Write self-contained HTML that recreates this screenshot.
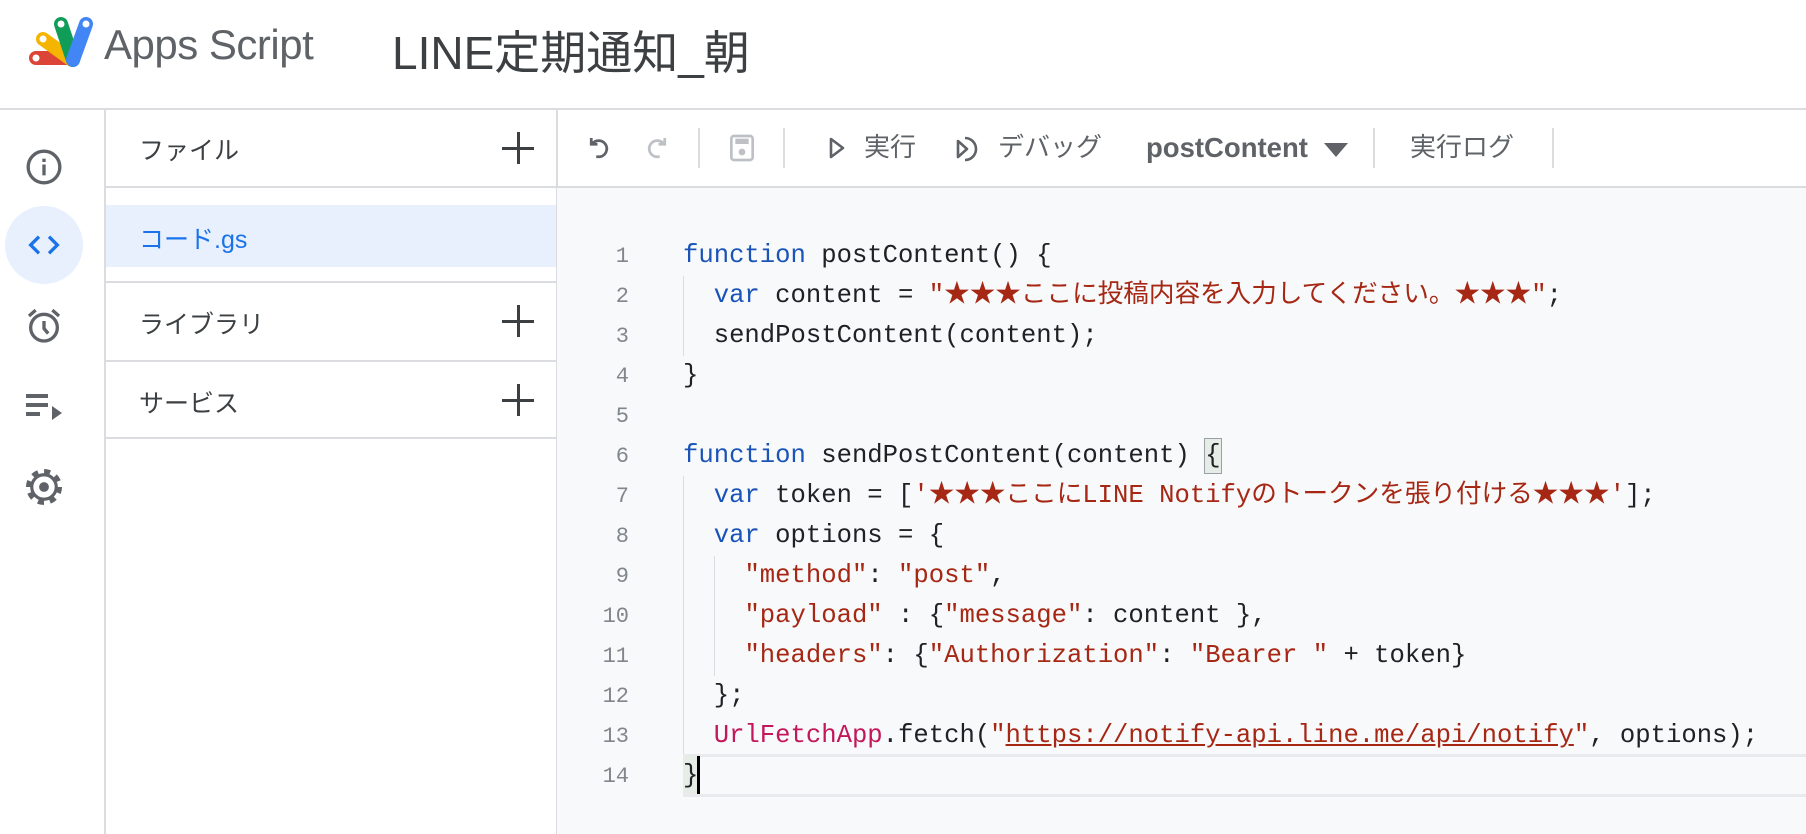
<!DOCTYPE html>
<html><head><meta charset="utf-8"><style>
*{margin:0;padding:0;box-sizing:border-box}
body{width:1806px;height:834px;background:#fff;position:relative;overflow:hidden;font-family:"Liberation Sans","Noto Sans CJK JP",sans-serif;color:#3c4043}
.a{position:absolute}
.hl{position:absolute;background:#dadce0}
.side{font-size:25px;color:#3c4043}
.plus{position:absolute;left:502px;width:32px;height:32px}
.plus:before,.plus:after{content:"";position:absolute;background:#3c4043}
.plus:before{left:15px;top:0;width:3px;height:32px}
.plus:after{top:15px;left:0;height:3px;width:32px}
.tb{position:absolute;top:130px;font-size:26px;color:#5f6368;line-height:34px}
.code{position:absolute;left:557px;top:188px;right:0;bottom:0;background:#f8f9fa;overflow:hidden}
.ln{position:absolute;left:0;width:72px;text-align:right;font-family:"Liberation Mono",monospace;font-size:22px;color:#80868b}
.cl{position:absolute;left:126px;white-space:pre;font-family:"Liberation Mono","Noto Sans CJK JP",monospace;font-size:25.6px;color:#202124;line-height:40px}
.k{color:#1a54b8}.s{color:#a52714}.m{color:#c2185b}
.g{position:absolute;width:1px;background:#dadce0}
</style></head><body>
<svg class="a" style="left:0;top:0" width="110" height="80" viewBox="0 0 110 80">
<g stroke-linecap="round" stroke-width="14" fill="none">
<line x1="36" y1="58" x2="70" y2="58" stroke="#db4437"/>
<line x1="43" y1="39" x2="72" y2="60" stroke="#f4b400"/>
<line x1="61" y1="24" x2="73" y2="60" stroke="#0f9d58"/>
<line x1="86" y1="24" x2="73" y2="60" stroke="#4285f4"/>
</g>
<g fill="#fff"><circle cx="36" cy="58" r="3.5"/><circle cx="43" cy="39" r="3.5"/><circle cx="61" cy="24" r="3.5"/><circle cx="86" cy="24" r="3.5"/></g>
</svg>
<div class="a" style="left:104px;top:21px;font-size:42px;color:#5f6368;letter-spacing:-0.5px">Apps Script</div>
<div class="a" style="left:392px;top:17px;font-size:46px;color:#3c4043">LINE定期通知_朝</div>
<div class="hl" style="left:0;top:108px;width:1806px;height:2px"></div>
<div class="hl" style="left:104px;top:110px;width:2px;height:724px"></div>
<div class="hl" style="left:556px;top:110px;width:2px;height:724px"></div>
<!-- rail -->
<svg class="a" style="left:24px;top:147px" width="40" height="40" viewBox="0 0 24 24"><circle cx="12" cy="12" r="9.5" fill="none" stroke="#5f6368" stroke-width="2"/><rect x="11" y="10.5" width="2" height="6.5" fill="#5f6368"/><rect x="11" y="7" width="2" height="2" fill="#5f6368"/></svg>
<div class="a" style="left:5px;top:206px;width:78px;height:78px;border-radius:50%;background:#e8f0fe"></div>
<svg class="a" style="left:24px;top:225px" width="40" height="40" viewBox="0 0 24 24"><path d="M9 7 L4 12 L9 17 M15 7 L20 12 L15 17" fill="none" stroke="#1a73e8" stroke-width="2"/></svg>
<svg class="a" style="left:24px;top:305px" width="40" height="42" viewBox="0 0 24 24"><circle cx="12" cy="13" r="8" fill="none" stroke="#5f6368" stroke-width="2"/><path d="M12 9v4.5l2.5 3" fill="none" stroke="#5f6368" stroke-width="2"/><path d="M3 6l4-3.5M21 6l-4-3.5" stroke="#5f6368" stroke-width="2"/></svg>
<svg class="a" style="left:24px;top:392px" width="42" height="34" viewBox="0 0 42 34"><rect x="2" y="2" width="22" height="4" fill="#5f6368"/><rect x="2" y="11" width="22" height="4" fill="#5f6368"/><rect x="2" y="20" width="14" height="4" fill="#5f6368"/><path d="M28 14l10 7-10 7z" fill="#5f6368"/></svg>
<svg class="a" style="left:23px;top:466px" width="42" height="42" viewBox="0 0 24 24"><circle cx="12" cy="12" r="8.6" fill="none" stroke="#5f6368" stroke-width="3.4" stroke-dasharray="3.4 3.35"/><circle cx="12" cy="12" r="7" fill="#fff" stroke="#5f6368" stroke-width="1.8"/><circle cx="12" cy="12" r="2.8" fill="#5f6368"/></svg>
<!-- files panel -->
<div class="a side" style="left:139px;top:131px">ファイル</div><div class="plus" style="top:132px"></div>
<div class="hl" style="left:106px;top:186px;width:450px;height:2px"></div>
<div class="a" style="left:106px;top:205px;width:450px;height:62px;background:#e8f0fe"></div>
<div class="a side" style="left:139px;top:220px;color:#1a73e8">コード.gs</div>
<div class="hl" style="left:106px;top:281px;width:450px;height:2px"></div>
<div class="a side" style="left:139px;top:305px">ライブラリ</div><div class="plus" style="top:305px"></div>
<div class="hl" style="left:106px;top:360px;width:450px;height:2px"></div>
<div class="a side" style="left:139px;top:384px">サービス</div><div class="plus" style="top:384px"></div>
<div class="hl" style="left:106px;top:437px;width:450px;height:2px"></div>
<!-- toolbar -->
<svg class="a" style="left:585px;top:133px" width="30" height="30" viewBox="0 0 24 24"><path d="M5 4v5h5M5.5 9A6.5 6.5 0 1 1 12 19H9" fill="none" stroke="#5f6368" stroke-width="2.2"/></svg>
<svg class="a" style="left:641px;top:133px" width="30" height="30" viewBox="0 0 24 24"><path d="M19 4v5h-5M18.5 9A6.5 6.5 0 1 0 12 19H15" fill="none" stroke="#bdc1c6" stroke-width="2.2"/></svg>
<div class="hl" style="left:698px;top:128px;width:2px;height:40px"></div>
<svg class="a" style="left:726px;top:131px" width="32" height="34" viewBox="0 0 24 24"><rect x="4" y="3" width="16" height="18" rx="2" fill="none" stroke="#bdc1c6" stroke-width="2"/><rect x="7" y="5" width="10" height="4" fill="#bdc1c6"/><circle cx="12" cy="15" r="2.5" fill="#bdc1c6"/></svg>
<div class="hl" style="left:783px;top:128px;width:2px;height:40px"></div>
<svg class="a" style="left:828px;top:136px" width="20" height="24" viewBox="0 0 20 24"><path d="M3 3l12 9-12 9z" fill="none" stroke="#5f6368" stroke-width="2.6" stroke-linejoin="round"/></svg>
<div class="tb" style="left:864px">実行</div>
<svg class="a" style="left:955px;top:134px" width="32" height="30" viewBox="0 0 32 30"><path d="M3 7l9 8-9 8z" fill="none" stroke="#5f6368" stroke-width="2.6" stroke-linejoin="round"/><path d="M10 4A11 11 0 1 1 10 26" fill="none" stroke="#5f6368" stroke-width="2.6"/></svg>
<div class="tb" style="left:998px">デバッグ</div>
<div class="tb" style="left:1146px;font-weight:bold;color:#5f6368;font-size:27.5px;top:131px">postContent</div>
<svg class="a" style="left:1323px;top:142px" width="26" height="16" viewBox="0 0 26 16"><path d="M1 1h24L13 15z" fill="#5f6368"/></svg>
<div class="hl" style="left:1373px;top:128px;width:2px;height:40px"></div>
<div class="tb" style="left:1410px">実行ログ</div>
<div class="hl" style="left:1552px;top:128px;width:2px;height:40px"></div>
<div class="hl" style="left:558px;top:186px;width:1248px;height:2px"></div>
<!-- code -->
<div class="code">
<div class="g" style="left:126px;top:88px;height:80px"></div>
<div class="g" style="left:126px;top:288px;height:280px"></div>
<div class="g" style="left:157px;top:368px;height:120px"></div>
<div class="a" style="left:126px;top:566px;right:0;height:3px;background:#e8eaed"></div>
<div class="a" style="left:126px;top:606px;right:0;height:3px;background:#e8eaed"></div>
<div class="a" style="left:647px;top:250px;width:18px;height:36px;border:1px solid #9aa0a6;background:#e6ece6"></div>
<div class="a" style="left:126px;top:568px;width:15px;height:38px;background:#e6ece6"></div>
<div class="a" style="left:140px;top:568px;width:3px;height:38px;background:#000"></div>
<div class="ln" style="top:56px">1</div><div class="ln" style="top:96px">2</div><div class="ln" style="top:136px">3</div><div class="ln" style="top:176px">4</div><div class="ln" style="top:216px">5</div><div class="ln" style="top:256px">6</div><div class="ln" style="top:296px">7</div><div class="ln" style="top:336px">8</div><div class="ln" style="top:376px">9</div><div class="ln" style="top:416px">10</div><div class="ln" style="top:456px">11</div><div class="ln" style="top:496px">12</div><div class="ln" style="top:536px">13</div><div class="ln" style="top:576px">14</div>
<div class="cl" style="top:48px"><span class="k">function</span> postContent() {</div>
<div class="cl" style="top:88px">  <span class="k">var</span> content = <span class="s">"★★★ここに投稿内容を入力してください。★★★"</span>;</div>
<div class="cl" style="top:128px">  sendPostContent(content);</div>
<div class="cl" style="top:168px">}</div>
<div class="cl" style="top:248px"><span class="k">function</span> sendPostContent(content) {</div>
<div class="cl" style="top:288px">  <span class="k">var</span> token = [<span class="s">'★★★ここにLINE Notifyのトークンを張り付ける★★★'</span>];</div>
<div class="cl" style="top:328px">  <span class="k">var</span> options = {</div>
<div class="cl" style="top:368px">    <span class="s">"method"</span>: <span class="s">"post"</span>,</div>
<div class="cl" style="top:408px">    <span class="s">"payload"</span> : {<span class="s">"message"</span>: content },</div>
<div class="cl" style="top:448px">    <span class="s">"headers"</span>: {<span class="s">"Authorization"</span>: <span class="s">"Bearer "</span> + token}</div>
<div class="cl" style="top:488px">  };</div>
<div class="cl" style="top:528px">  <span class="m">UrlFetchApp</span>.fetch(<span class="s">"<u>https://notify-api.line.me/api/notify</u>"</span>, options);</div>
<div class="cl" style="top:568px">}</div>
</div>
</body></html>
